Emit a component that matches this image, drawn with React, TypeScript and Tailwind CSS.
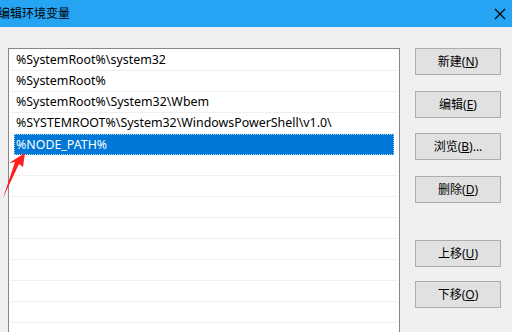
import React from 'react'

const rows = [
  '%SystemRoot%\\system32',
  '%SystemRoot%',
  '%SystemRoot%\\System32\\Wbem',
  '%SYSTEMROOT%\\System32\\WindowsPowerShell\\v1.0\\',
  '%NODE_PATH%',
  '', '', '', '', '', '', '', '', '',
]

const buttons: { label: string; key: string; tail?: string; gap: string }[] = [
  { label: '新建', key: 'N', gap: 'mt-0' },
  { label: '编辑', key: 'E', gap: 'mt-[16px]' },
  { label: '浏览', key: 'B', tail: '...', gap: 'mt-[15px]' },
  { label: '删除', key: 'D', gap: 'mt-[16px]' },
  { label: '上移', key: 'U', gap: 'mt-[37px]' },
  { label: '下移', key: 'O', gap: 'mt-[14px]' },
]

const font = { fontFamily: '"Noto Sans", "Noto Sans CJK SC", sans-serif' }

export default function App() {
  return (
    <div className="relative w-[512px] h-[332px] overflow-hidden bg-[#f0f0f0] text-[12px]" style={font}>
      {/* title bar */}
      <div className="flex h-[27px] items-center justify-between bg-[#24a4f2]">
        <span className="-ml-[2px] text-[12px] text-black">编辑环境变量</span>
        <svg width="12" height="12" viewBox="0 0 12 12" className="mr-[6px]">
          <path d="M1 1 L11 11 M11 1 L1 11" stroke="#000" strokeWidth="1.2" />
        </svg>
      </div>

      <div className="flex pl-[8px] pt-[21px]">
        {/* list */}
        <div className="w-[392px] h-[300px] border border-[#828790] bg-white pt-[1px] text-[12.4px]">
          {rows.map((r, i) =>
            i === 4 ? (
              <div key={i} className="mx-[5px] h-[21px] bg-[#0078d7] border border-dotted border-[#a9cdee]">
                <div className="pl-[1px] leading-[19px] text-white">{r}</div>
              </div>
            ) : (
              <div key={i} className="ml-[2px] mr-[2px] h-[21px] border-b border-[#efefef]">
                <div className="pl-[5px] leading-[20px] text-black">{r}</div>
              </div>
            )
          )}
        </div>

        {/* buttons */}
        <div className="ml-[15px] flex flex-col">
          {buttons.map((b) => (
            <button
              key={b.key}
              className={`${b.gap} h-[27px] w-[86px] border border-[#adadad] bg-[#e1e1e1] text-black text-[12px]`}
            >
              {b.label}(<span className="underline">{b.key}</span>){b.tail}
            </button>
          ))}
        </div>
      </div>

      {/* red arrow */}
      <svg className="absolute left-0 top-0" width="40" height="210" viewBox="0 0 40 210">
        <polygon points="25,153 23,167 19,164 3,198 15,162 9,163" fill="#ff1f1f" />
      </svg>
    </div>
  )
}
